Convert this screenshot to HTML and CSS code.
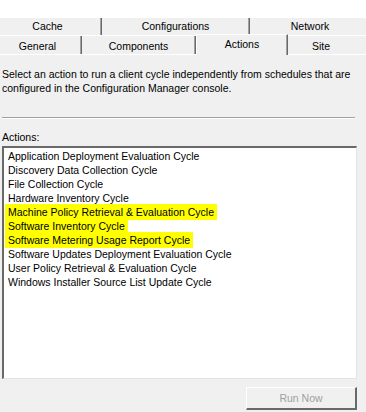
FILE: index.html
```html
<!DOCTYPE html>
<html lang="en">
<head>
  <meta charset="UTF-8">
  <title>Configuration Manager Properties - Actions</title>
  <link rel="stylesheet" href="styles.css">
</head>
<body>

<div class="top-band"></div>

<div class="tabs">
  <div class="tab-row row-back">
    <div class="tab tab-cache">Cache</div>
    <div class="tab tab-config">Configurations</div>
    <div class="tab tab-network">Network</div>
  </div>
  <div class="tab-row row-front">
    <div class="tab tab-general">General</div>
    <div class="tab tab-components">Components</div>
    <div class="tab tab-actions selected">Actions</div>
    <div class="tab tab-site">Site</div>
  </div>
</div>

<div class="panel">
  <p class="intro">Select an action to run a client cycle independently from schedules that are configured in the Configuration Manager console.</p>

  <div class="separator"></div>

  <label class="list-label">Actions:</label>
  <div class="listbox">
    <div class="item">Application Deployment Evaluation Cycle</div>
    <div class="item">Discovery Data Collection Cycle</div>
    <div class="item">File Collection Cycle</div>
    <div class="item">Hardware Inventory Cycle</div>
    <div class="item"><span class="mark">Machine Policy Retrieval &amp; Evaluation Cycle</span></div>
    <div class="item"><span class="mark">Software Inventory Cycle</span></div>
    <div class="item"><span class="mark">Software Metering Usage Report Cycle</span></div>
    <div class="item">Software Updates Deployment Evaluation Cycle</div>
    <div class="item">User Policy Retrieval &amp; Evaluation Cycle</div>
    <div class="item">Windows Installer Source List Update Cycle</div>
  </div>

  <div class="buttons">
    <button class="btn" disabled>Run Now</button>
  </div>
</div>

</body>
</html>
```

FILE: styles.css
```css
body {
  margin: 0;
  font-family: "Liberation Sans", Arial, sans-serif;
  font-size: 10.5px;
  color: #000;
  background-color: #f0f0f0;
  overflow: hidden;
}
.top-band {
  height: 17px;
  background: #ffffff;
}
.tabs {
  width: 366px;
  overflow: hidden;
}
.tab-row {
  display: flex;
  height: 17px;
}
.row-back {
  border-top: 1px solid #ffffff;
}
.row-front {
  height: 18px;
  border-top: 1px solid #ffffff;
  border-bottom: 1px solid #ffffff;
}
.tab {
  box-sizing: border-box;
  flex: none;
  text-align: center;
  line-height: 15px;
  padding-top: 1px;
  border-right: 1px solid #696969;
  box-shadow: inset -1px 0 0 #a0a0a0;
}
.row-front .tab {
  padding-top: 3px;
}
.tab-cache { width: 108px; margin-left: -6px; }
.tab-config { width: 148px; }
.tab-network { width: 120px; border-right: none; box-shadow: none; }
.tab-general { width: 88px; margin-left: -6px; }
.tab-components { width: 114px; }
.tab-actions { width: 92px; }
.tab-site { width: 66px; border-right: none; box-shadow: none; }
.tab.selected {
  position: relative;
  margin-top: -2px;
  height: 21px;
  padding-top: 2px;
  background: #f0f0f0;
  border-top: 1px solid #ffffff;
  border-left: 1px solid #ffffff;
}
.panel {
  padding: 0 0 0 2px;
}
.intro {
  margin: 12px 0 0;
  width: 364px;
  line-height: 14px;
}
.separator {
  margin-top: 22px;
  width: 353px;
  height: 1px;
  background: #a0a0a0;
  border-bottom: 1px solid #ffffff;
}
.list-label {
  display: block;
  margin-top: 11px;
  line-height: 14px;
}
.listbox {
  box-sizing: border-box;
  margin-top: 2px;
  width: 355px;
  height: 233px;
  padding: 1px 0 0 4px;
  background: #ffffff;
  border-top: 2px solid #696969;
  border-left: 2px solid #696969;
  border-right: 1px solid #e3e3e3;
  border-bottom: 1px solid #e3e3e3;
}
.item {
  height: 14px;
  line-height: 14px;
  white-space: nowrap;
}
.mark {
  display: inline-block;
  background: #ffff00;
  margin-left: -3px;
  padding: 1px 3px 1px 3px;
  margin-top: -1px;
}
.buttons {
  display: flex;
  justify-content: flex-end;
  width: 355px;
  margin-top: 8px;
}
.btn {
  box-sizing: border-box;
  width: 111px;
  height: 23px;
  font-family: "Liberation Sans", Arial, sans-serif;
  font-size: 10.5px;
  color: #a0a0a0;
  background: #f0f0f0;
  border-top: 1px solid #ffffff;
  border-left: 1px solid #ffffff;
  border-right: 2px solid #696969;
  border-bottom: 2px solid #696969;
  padding: 0;
}
```
